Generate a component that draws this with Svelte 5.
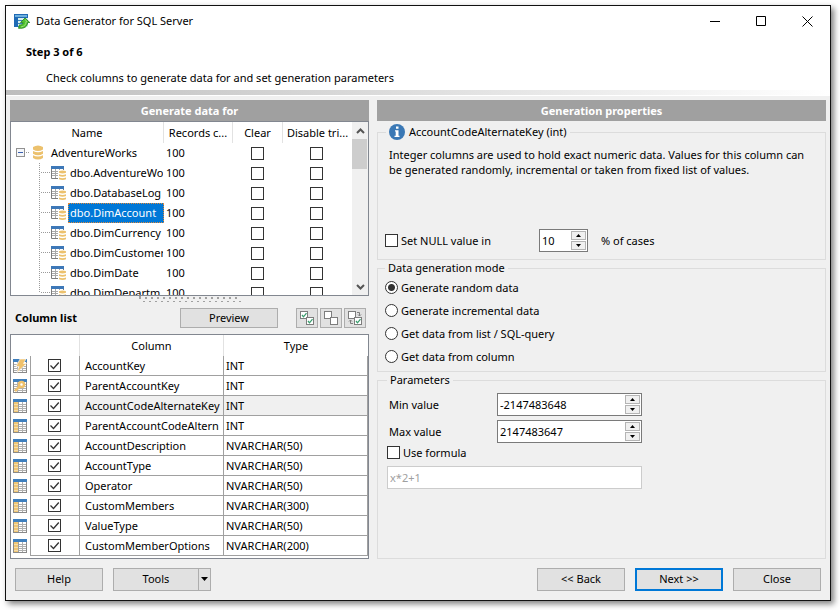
<script lang="ts">
  let tables = $state([
    { name: 'dbo.AdventureWor', records: 100, clear: false, triggers: false },
    { name: 'dbo.DatabaseLog', records: 100, clear: false, triggers: false },
    { name: 'dbo.DimAccount', records: 100, clear: false, triggers: false },
    { name: 'dbo.DimCurrency', records: 100, clear: false, triggers: false },
    { name: 'dbo.DimCustomer', records: 100, clear: false, triggers: false },
    { name: 'dbo.DimDate', records: 100, clear: false, triggers: false },
    { name: 'dbo.DimDepartm', records: 100, clear: false, triggers: false },
  ]);
  let root = $state({ clear: false, triggers: false });
  let selected = $state('dbo.DimAccount');

  let columns = $state([
    { name: 'AccountKey', type: 'INT', icon: 'identity', checked: true },
    { name: 'ParentAccountKey', type: 'INT', icon: 'key', checked: true },
    { name: 'AccountCodeAlternateKey', type: 'INT', icon: 'column', checked: true },
    { name: 'ParentAccountCodeAltern', type: 'INT', icon: 'column', checked: true },
    { name: 'AccountDescription', type: 'NVARCHAR(50)', icon: 'column', checked: true },
    { name: 'AccountType', type: 'NVARCHAR(50)', icon: 'column', checked: true },
    { name: 'Operator', type: 'NVARCHAR(50)', icon: 'column', checked: true },
    { name: 'CustomMembers', type: 'NVARCHAR(300)', icon: 'column', checked: true },
    { name: 'ValueType', type: 'NVARCHAR(50)', icon: 'column', checked: true },
    { name: 'CustomMemberOptions', type: 'NVARCHAR(200)', icon: 'column', checked: true },
  ]);
  let currentColumn = $state('AccountCodeAlternateKey');

  const modes = [
    { id: 'random', label: 'Generate random data' },
    { id: 'incremental', label: 'Generate incremental data' },
    { id: 'list', label: 'Get data from list / SQL-query' },
    { id: 'column', label: 'Get data from column' },
  ];
  let mode = $state('random');

  let setNull = $state(false);
  let useFormula = $state(false);
  let formula = $state('x*2+1');
  let values = $state({ percent: 10, min: -2147483648, max: 2147483647 });

  function setAll(checked: boolean) {
    for (const c of columns) c.checked = checked;
  }

  function invert() {
    for (const c of columns) c.checked = !c.checked;
  }
</script>

{#snippet spinner(id: 'percent' | 'min' | 'max', label: string)}
  <span class="spinner">
    <input {id} type="text" inputmode="numeric" aria-label={label} bind:value={values[id]} />
    <span class="arrows">
      <button type="button" aria-label="Increase" onclick={() => (values[id] = Number(values[id]) + 1)}>
        <svg width="5" height="3" viewBox="0 0 5 3"><path d="M0 3L2.5 0L5 3Z" /></svg>
      </button>
      <button type="button" aria-label="Decrease" onclick={() => (values[id] = Number(values[id]) - 1)}>
        <svg width="5" height="3" viewBox="0 0 5 3"><path d="M0 0L2.5 3L5 0Z" /></svg>
      </button>
    </span>
  </span>
{/snippet}

{#snippet smallBox(x: number, y: number, ticked: boolean)}
  <rect x={x + 0.5} y={y + 0.5} width="7" height="7" fill="#fff" stroke="#7d7d7d" />
  {#if ticked}
    <path d="M{x + 2} {y + 4}l1.500 1.800 3-3.600" fill="none" stroke="#3a9d6e" stroke-width="1.300" />
  {/if}
{/snippet}

<main class="window">
  <header>
    <div class="titlebar">
      <svg class="logo" width="16" height="15" viewBox="0 0 16 15">
        <path d="M0 0h14v5H4v8H0z" fill="#1f6ab5" />
        <path d="M1 1h12v2H1z" fill="#6fb0de" />
        <path d="M4 4h10v9H4z" fill="#d9f0ee" />
        <path d="M4 6.500h10M4 9.500h10M4 12.500h4" stroke="#3d87b8" />
        <path
          d="M11 4L15.800 8.500H13.500C13.500 12.300 11 14.700 4.500 14.300L5.500 10.800C7.800 11.400 8.900 10.500 8.900 8.500H6.500Z"
          fill="#4fc02f"
          stroke="#23831a"
          stroke-width="0.800"
        />
        <path d="M11 5.600L13.200 7.700H12C12 10.600 10.500 12.400 7 12.900" fill="none" stroke="#9fe37c" stroke-width="0.900" />
      </svg>
      <span class="title">Data Generator for SQL Server</span>
      <button type="button" aria-label="Minimize">
        <svg width="11" height="11" viewBox="0 0 11 11"><path d="M0 5.500H10" /></svg>
      </button>
      <button type="button" aria-label="Maximize">
        <svg width="11" height="11" viewBox="0 0 11 11"><path d="M.5 .5h9v9h-9z" /></svg>
      </button>
      <button type="button" aria-label="Close window">
        <svg width="11" height="11" viewBox="0 0 11 11"><path d="M.5 .5l10 10M10.500 .5l-10 10" /></svg>
      </button>
    </div>
    <h1>Step 3 of 6</h1>
    <p>Check columns to generate data for and set generation parameters</p>
    <div class="fade"></div>
  </header>

  <div class="panels">
    <section>
      <h2>Generate data for</h2>
      <div class="tree">
        <table>
          <colgroup>
            <col />
            <col class="w-records" />
            <col class="w-clear" />
            <col class="w-triggers" />
          </colgroup>
          <thead>
            <tr>
              <th>Name</th>
              <th>Records c...</th>
              <th>Clear</th>
              <th>Disable tri...</th>
            </tr>
          </thead>
          <tbody>
            <tr>
              <td>
                <div class="node">
                  <svg width="19" height="20" viewBox="0 0 19 20">
                    <rect x="5.500" y="5.500" width="8" height="8" fill="#f4f6f9" stroke="#919191" />
                    <path d="M7 9.500h5" stroke="#3a5fb0" />
                    <path d="M15 9.500h4" stroke="#9a9a9a" stroke-dasharray="1 1" />
                  </svg>
                  <svg class="database" width="17" height="20" viewBox="0 0 17 20">
                    <g fill="#ecc16d">
                      <path d="M3 4q5-3 10 0v2.500q-5 3-10 0z" />
                      <path d="M3 8q5 2.600 10 0v2.800q-5 3-10 0z" />
                      <path d="M3 12.300q5 2.600 10 0v2.700q-5 3-10 0z" />
                    </g>
                  </svg>
                  <span class="label">AdventureWorks</span>
                </div>
              </td>
              <td>100</td>
              <td class="tick"><input type="checkbox" aria-label="Clear AdventureWorks" bind:checked={root.clear} /></td>
              <td class="tick"><input type="checkbox" aria-label="Disable triggers in AdventureWorks" bind:checked={root.triggers} /></td>
            </tr>
            {#each tables as table, i}
              <tr onclick={() => (selected = table.name)}>
                <td>
                  <div class="node">
                    <svg class="branch" width="39" height="20" viewBox="0 0 39 20">
                      <path d={i === tables.length - 1 ? 'M28.500 0v10' : 'M28.500 0v20'} />
                      <path d="M30 9.500h9" />
                    </svg>
                    <svg width="17" height="20" viewBox="0 0 17 20">
                      <path d="M1.500 4v11.500h12V4" fill="#fff" stroke="#7c7c7c" />
                      <path d="M1 3h13v3H1z" fill="#3d78b8" />
                      <path d="M2 8.500h11M2 10.500h11M2 12.500h11" stroke="#a9a9a9" />
                      <path d="M5.500 6v9M9.500 6v9" stroke="#a9a9a9" />
                      <path d="M8 7h8v11H8z" fill="#fff" />
                      <g fill="#ecc16d">
                        <path d="M9 8.200q3.500-1.600 7 0v1.600q-3.500 1.600-7 0z" />
                        <path d="M9 11.200q3.500 1.600 7 0v1.800q-3.500 1.600-7 0z" />
                        <path d="M9 14.400q3.500 1.600 7 0v1.900q-3.500 1.600-7 0z" />
                      </g>
                    </svg>
                    <span class="label" class:selected={selected === table.name}>{table.name}</span>
                  </div>
                </td>
                <td>{table.records}</td>
                <td class="tick"><input type="checkbox" aria-label="Clear {table.name}" bind:checked={table.clear} /></td>
                <td class="tick"><input type="checkbox" aria-label="Disable triggers on {table.name}" bind:checked={table.triggers} /></td>
              </tr>
            {/each}
          </tbody>
        </table>
        <div class="scrollbar">
          <button type="button" aria-label="Scroll up">
            <svg width="9" height="6" viewBox="0 0 9 6"><path d="M1 5l3.500-3.500L8 5" /></svg>
          </button>
          <div class="track"><div class="thumb"></div></div>
          <button type="button" aria-label="Scroll down">
            <svg width="9" height="6" viewBox="0 0 9 6"><path d="M1 1l3.500 3.500L8 1" /></svg>
          </button>
        </div>
      </div>
      <div class="splitter"></div>

      <div class="toolbar">
        <h3>Column list</h3>
        <button type="button" class="button preview">Preview</button>
        <div class="tools">
          <button type="button" class="button" aria-label="Check all" onclick={() => setAll(true)}>
            <svg width="14" height="14" viewBox="0 0 14 14">
              {@render smallBox(0, 0, true)}
              {@render smallBox(6, 6, true)}
            </svg>
          </button>
          <button type="button" class="button" aria-label="Uncheck all" onclick={() => setAll(false)}>
            <svg width="14" height="14" viewBox="0 0 14 14">
              {@render smallBox(0, 0, false)}
              {@render smallBox(6, 6, false)}
            </svg>
          </button>
          <button type="button" class="button" aria-label="Invert selection" onclick={invert}>
            <svg width="14" height="14" viewBox="0 0 14 14">
              {@render smallBox(0, 0, false)}
              {@render smallBox(6, 6, true)}
              <path d="M9 1.500h2.500v3.500M10 3.500l1.500 1.500 1.500-1.500M5 12.500H2.500V9M1 10.500L2.500 9l1.500 1.500" fill="none" stroke="#7d7d7d" />
            </svg>
          </button>
        </div>
      </div>

      <div class="columns">
        <table>
          <colgroup>
            <col class="w-icon" />
            <col class="w-check" />
            <col />
            <col />
          </colgroup>
          <thead>
            <tr>
              <th></th>
              <th></th>
              <th>Column</th>
              <th>Type</th>
            </tr>
          </thead>
          <tbody>
            {#each columns as column}
              <tr class:current={currentColumn === column.name} onclick={() => (currentColumn = column.name)}>
                <td>
                  <svg width="14" height="14" viewBox="0 0 14 14" shape-rendering="crispEdges">
                    <path d="M0 0h14v14H0z" fill="#8a8a8a" />
                    <path d="M0 0h14v3H0z" fill="#3f7fbd" />
                    <path d="M1 3h12v10H1z" fill="#fff" />
                    <path d="M5 5.500h8M5 7.500h8M5 9.500h8M5 11.500h8M9.500 3v10" stroke="#b0b0b0" />
                    {#if column.icon === 'column'}
                      <path d="M1 3h4v10H1z" fill="#f0c674" />
                      <path d="M1 5.500h4M1 8.500h4M1 11.500h4" stroke="#f6ddaa" />
                      <path d="M5.500 3v10" stroke="#a0a0a0" />
                    {:else}
                      <path d="M1 5.500h4M1 7.500h4M1 9.500h4M1 11.500h4M4.500 3v10" stroke="#b0b0b0" />
                    {/if}
                    {#if column.icon === 'identity'}
                      <path
                        d="M7 0h6L10.500 4.500h3L4 13.500l2-6H3Z"
                        fill="#efc16c"
                        stroke="#fff"
                        stroke-width=".6"
                        shape-rendering="auto"
                      />
                    {:else if column.icon === 'key'}
                      <g fill="none" stroke="#efc16c" stroke-width="2.500" shape-rendering="auto">
                        <circle cx="8.500" cy="5.500" r="2.500" fill="#fff" />
                        <path d="M6.500 7.500L2 12" />
                      </g>
                    {/if}
                  </svg>
                </td>
                <td class="tick"><input type="checkbox" aria-label="Generate {column.name}" bind:checked={column.checked} /></td>
                <td>{column.name}</td>
                <td>{column.type}</td>
              </tr>
            {/each}
          </tbody>
        </table>
      </div>
    </section>

    <section>
      <h2>Generation properties</h2>
      <fieldset>
        <legend class="with-icon">
          <svg width="16" height="16" viewBox="0 0 16 16">
            <circle cx="8" cy="8" r="8" fill="#3a78b5" />
            <path d="M7 2.500h2.500v2.300H7zM6 6.300h3.500v5.400h1V13h-5v-1.300h1.200V7.600H6z" fill="#fff" />
          </svg>
          AccountCodeAlternateKey (int)
        </legend>
        <p class="description">
          Integer columns are used to hold exact numeric data. Values for this column can be generated randomly,
          incremental or taken from fixed list of values.
        </p>
        <div class="nulls">
          <label><input type="checkbox" bind:checked={setNull} />Set NULL value in</label>
          {@render spinner('percent', 'Percent of NULL values')}
          <span>% of cases</span>
        </div>
      </fieldset>

      <fieldset class="modes">
        <legend>Data generation mode</legend>
        {#each modes as m}
          <label><input type="radio" name="mode" value={m.id} bind:group={mode} />{m.label}</label>
        {/each}
      </fieldset>

      <fieldset class="parameters">
        <legend>Parameters</legend>
        <div class="field">
          <label for="min">Min value</label>
          {@render spinner('min', 'Min value')}
        </div>
        <div class="field">
          <label for="max">Max value</label>
          {@render spinner('max', 'Max value')}
        </div>
        <label class="use-formula"><input type="checkbox" bind:checked={useFormula} />Use formula</label>
        <input class="formula" type="text" aria-label="Formula" disabled={!useFormula} bind:value={formula} />
      </fieldset>
    </section>
  </div>

  <footer>
    <button type="button" class="button">Help</button>
    <div class="split">
      <button type="button" class="button">Tools</button>
      <button type="button" class="button" aria-label="More tools">
        <svg width="7" height="4" viewBox="0 0 7 4"><path d="M0 0h7L3.500 4Z" /></svg>
      </button>
    </div>
    <span class="spacer"></span>
    <button type="button" class="button">&lt;&lt; Back</button>
    <button type="button" class="button default">Next &gt;&gt;</button>
    <button type="button" class="button">Close</button>
  </footer>
</main>

<style>
  :global(body) {
    background: #fff;
  }

  .window {
    margin: 5px 9px 9px 5px;
    border: 1px solid #111;
    background: #f0f0f0;
    box-shadow: 3px 3px 6px rgba(0, 0, 0, 0.5);
    color: #000;
    font: 11px/16px 'Noto Sans', 'Open Sans', sans-serif;
  }

  .window *,
  .window *::before {
    box-sizing: border-box;
  }

  h1,
  h2,
  h3,
  p {
    margin: 0;
    font-size: 11px;
  }

  h1,
  h2,
  h3 {
    font-weight: 700;
  }

  button,
  input {
    margin: 0;
    padding: 0;
    border: 0;
    color: inherit;
    font: inherit;
  }

  svg {
    display: block;
    flex: none;
  }

  header {
    background: #fff;
    border-bottom: 1px solid #fff;
  }

  .titlebar {
    display: flex;
    align-items: center;
    height: 30px;
    padding-left: 8px;
  }

  .title {
    flex: 1;
    padding-left: 6px;
  }

  .titlebar button {
    display: flex;
    align-items: center;
    justify-content: center;
    width: 46px;
    height: 30px;
    background: none;
  }

  .titlebar button path {
    fill: none;
    stroke: #000;
  }

  header h1 {
    padding: 8px 20px 0;
  }

  header p {
    padding: 10px 40px 4px;
  }

  .fade {
    height: 5px;
    background: linear-gradient(90deg, #bdbdbd, #fff);
  }

  .panels {
    display: grid;
    grid-template-columns: 359fr 449fr;
    gap: 8px;
    padding: 4px 4px 0;
  }

  section {
    display: flex;
    flex-direction: column;
    min-width: 0;
  }

  h2 {
    padding: 3px 0 2px;
    background: #a0a0a0;
    color: #fff;
    text-align: center;
  }

  table {
    width: 100%;
    border-collapse: separate;
    border-spacing: 0;
    table-layout: fixed;
    white-space: nowrap;
  }

  th,
  td {
    height: 20px;
    padding: 0;
    overflow: hidden;
  }

  th {
    font-weight: 400;
    text-align: center;
  }

  .tick {
    padding-right: 2px;
  }

  .tick input {
    display: block;
    margin: 0 auto;
  }

  input[type='checkbox'],
  input[type='radio'] {
    flex: none;
    width: 13px;
    height: 13px;
    border: 1px solid #333;
    background: #fff;
    appearance: none;
  }

  input[type='checkbox']:checked {
    background: #fff url("data:image/svg+xml,%3Csvg xmlns='http://www.w3.org/2000/svg' viewBox='0 0 11 11'%3E%3Cpath d='M1.500 5.500l3 3L9.800 2.500' fill='none' stroke='%23333' stroke-width='1.300'/%3E%3C/svg%3E");
  }

  input[type='radio'] {
    border-radius: 50%;
  }

  input[type='radio']:checked {
    background: radial-gradient(circle, #333 3px, #fff 4px);
  }

  .tree {
    display: flex;
    height: 175px;
    overflow: hidden;
    border: 1px solid #828790;
    background: #fff;
  }

  .tree table {
    flex: 1;
    width: 0;
  }

  .w-records {
    width: 69px;
  }

  .w-clear {
    width: 50px;
  }

  .w-triggers {
    width: 69px;
  }

  .tree th {
    height: 21px;
    border-right: 1px solid #e2e2e2;
  }

  .tree th:last-child {
    border-right: 0;
  }

  .tree td:nth-child(2) {
    padding-left: 2px;
  }

  .node {
    display: flex;
    align-items: center;
    height: 20px;
    overflow: hidden;
  }

  .database {
    margin-right: 1px;
  }

  .label {
    flex: 1;
    min-width: 0;
    margin: 0 1px;
    padding: 2px 0 2px 2px;
    overflow: hidden;
  }

  .branch path {
    fill: none;
    stroke: #9a9a9a;
    stroke-dasharray: 1 1;
  }

  .label.selected {
    margin-right: 0;
    outline: 1px dotted #e08a3c;
    outline-offset: -1px;
    background: #0078d7;
    color: #fff;
  }

  .scrollbar {
    display: flex;
    flex-direction: column;
    width: 16px;
    background: #f0f0f0;
  }

  .scrollbar button {
    display: flex;
    align-items: center;
    justify-content: center;
    height: 17px;
    background: none;
  }

  .scrollbar path {
    fill: none;
    stroke: #555;
    stroke-width: 2;
  }

  .track {
    flex: 1;
  }

  .thumb {
    width: 15px;
    height: 30px;
    background: #cdcdcd;
  }

  .splitter {
    width: 102px;
    height: 6px;
    margin: 0 auto;
    background:
      linear-gradient(#a0a0a0, #a0a0a0) 0 0 / 2px 2px,
      conic-gradient(from 90deg at 4px 4px, #a0a0a0 90deg, transparent 0) 0 1px / 6px 6px,
      conic-gradient(from 270deg at 2px 2px, #a0a0a0 90deg, transparent 0) 0 1px / 6px 6px;
    background-repeat: no-repeat, repeat-x, repeat-x;
  }

  .toolbar {
    display: flex;
    align-items: center;
    padding: 6px 3px 6px 5px;
  }

  .toolbar h3 {
    flex: 1;
  }

  .tools {
    display: flex;
    gap: 2px;
    margin-left: 18px;
  }

  .button {
    display: flex;
    align-items: center;
    justify-content: center;
    width: 88px;
    height: 23px;
    padding-bottom: 1px;
    border: 1px solid #adadad;
    background: #e1e1e1;
  }

  .toolbar .preview {
    width: 98px;
    height: 20px;
  }

  .tools .button {
    width: 22px;
    height: 20px;
    padding: 0;
  }

  .columns {
    flex: 1;
    padding-bottom: 2px;
    border: 1px solid #828790;
    background: #fff;
  }

  .w-icon {
    width: 20px;
  }

  .w-check {
    width: 49px;
  }

  .columns th {
    height: 21px;
    border-right: 1px solid #e2e2e2;
  }

  .columns th:first-child,
  .columns th:last-child {
    border-right: 0;
  }

  .columns td {
    border-right: 1px solid #a0a0a0;
    border-bottom: 1px solid #a0a0a0;
  }

  .columns td:first-child {
    padding-left: 2px;
    border-bottom: 0;
  }

  .columns td:nth-child(3) {
    padding-left: 5px;
  }

  .columns td:nth-child(4) {
    padding-left: 2px;
  }

  .current td:nth-child(n + 3) {
    background: #f0f0f0;
  }

  fieldset {
    min-width: 0;
    margin: 0;
    padding: 0 7px;
    border: 1px solid #dcdcdc;
  }

  h2 + fieldset {
    margin-top: 3px;
  }

  legend {
    padding: 0 3px;
  }

  .with-icon {
    display: flex;
    gap: 4px;
    margin-left: 1px;
  }

  .description {
    min-height: 83px;
    padding: 7px 4px 0;
    line-height: 15px;
  }

  .nulls {
    display: flex;
    align-items: center;
    padding: 6px 0 7px;
  }

  .nulls label {
    width: 154px;
  }

  .nulls .spinner {
    width: 49px;
    margin-right: 13px;
  }

  label {
    display: flex;
    align-items: center;
    gap: 3px;
  }

  .modes {
    padding-bottom: 3px;
  }

  .modes label {
    height: 23px;
  }

  .parameters {
    flex: 1;
    padding: 5px 9px;
  }

  .field {
    display: flex;
    align-items: center;
    margin-bottom: 4px;
  }

  .field label {
    width: 110px;
    padding-left: 2px;
  }

  .field .spinner {
    width: 145px;
  }

  .spinner {
    display: flex;
    height: 23px;
    padding: 1px;
    border: 1px solid #7a7a7a;
    background: #fff;
  }

  .spinner input {
    flex: 1;
    min-width: 0;
    padding-left: 1px;
    background: none;
  }

  .arrows {
    display: flex;
    flex-direction: column;
    gap: 1px;
    width: 15px;
  }

  .arrows button {
    display: flex;
    flex: 1;
    align-items: center;
    justify-content: center;
    min-height: 0;
    border: 1px solid #b4b4b4;
    background: #f0f0f0;
  }

  .use-formula {
    height: 19px;
    margin-top: -4px;
  }

  .formula {
    display: block;
    width: 255px;
    height: 23px;
    margin-top: 4px;
    padding: 0 2px;
    border: 1px solid #7a7a7a;
    background: #fff;
  }

  .formula:disabled {
    border-color: #ccc;
    color: #a0a0a0;
  }

  footer {
    display: flex;
    gap: 10px;
    padding: 9px;
  }

  .spacer {
    flex: 1;
  }

  .split {
    display: flex;
  }

  .split .button:first-child {
    width: 86px;
  }

  .split .button:last-child {
    width: 13px;
    margin-left: -1px;
  }

  .default {
    border: 2px solid #0078d7;
  }
</style>
